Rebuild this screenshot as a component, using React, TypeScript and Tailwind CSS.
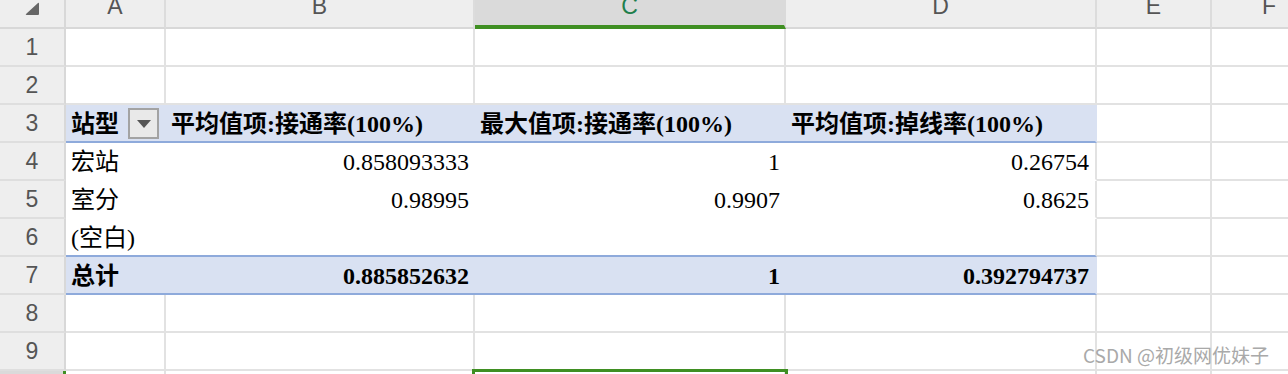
import React from "react";

// 列幅（行番号列の右側）
const COLS = [
  { key: "A", w: "w-[100px]" },
  { key: "B", w: "w-[309px]" },
  { key: "C", w: "w-[311px]" },
  { key: "D", w: "w-[311px]" },
  { key: "E", w: "w-[115px]" },
  { key: "F", w: "w-[116px]" },
];

const cellFont = "font-['Liberation_Serif','Noto_Sans_CJK_SC',serif] text-[24px] leading-none text-black";

type PivotRow = {
  n: number;
  cells: string[];
  kind: "head" | "body" | "total";
};

const pivot: PivotRow[] = [
  { n: 3, kind: "head", cells: ["站型", "平均值项:接通率(100%)", "最大值项:接通率(100%)", "平均值项:掉线率(100%)"] },
  { n: 4, kind: "body", cells: ["宏站", "0.858093333", "1", "0.26754"] },
  { n: 5, kind: "body", cells: ["室分", "0.98995", "0.9907", "0.8625"] },
  { n: 6, kind: "body", cells: ["(空白)", "", "", ""] },
  { n: 7, kind: "total", cells: ["总计", "0.885852632", "1", "0.392794737"] },
];

function RowHeader({ n }: { n: number }) {
  return (
    <div className="w-[66px] h-[38px] shrink-0 bg-[#eeeeee] border-r-2 border-b-2 border-r-[#d8d8d8] border-b-[#dedede] flex items-center justify-center font-['Liberation_Sans',sans-serif] text-[23px] text-[#555555]">
      {n}
    </div>
  );
}

function EmptyCell({ w }: { w: string }) {
  return <div className={`${w} h-[38px] shrink-0 border-r-2 border-b-2 border-[#e2e2e2] bg-white`} />;
}

function DropButton() {
  return (
    <span className="ml-[9px] mb-[-3px] w-[31px] h-[31px] shrink-0 inline-flex items-center justify-center border-2 border-[#a3a3a3] bg-[#e9e9e9]">
      <svg width="14" height="8" viewBox="0 0 14 8">
        <polygon points="0,0 14,0 7,8" fill="#555555" />
      </svg>
    </span>
  );
}

function PivotLine({ row }: { row: PivotRow }) {
  const blue = row.kind !== "body";
  const bg = blue ? "bg-[#d9e1f2]" : "bg-white";
  // 6行目の下線＝総計行の上線
  const bottom =
    row.kind === "head" || row.kind === "total" || row.n === 6
      ? "border-b-2 border-b-[#8eaadb]"
      : "border-b-2 border-b-white";
  const weight = row.kind === "body" ? "font-normal" : "font-bold";
  return (
    <div className="flex">
      <RowHeader n={row.n} />
      {row.cells.map((t, i) => {
        const numeric = row.kind !== "head" && i > 0;
        const last = i === 3;
        const right = last
          ? blue
            ? "border-r-2 border-r-[#d9e1f2]"
            : "border-r-2 border-r-[#e2e2e2]"
          : "";
        return (
          <div
            key={i}
            className={`${COLS[i].w} h-[38px] shrink-0 ${bg} ${bottom} ${right} ${cellFont} ${weight} flex items-end pb-[5px] ${
              numeric ? "justify-end pr-[6px]" : "justify-start pl-[5px]"
            } whitespace-nowrap`}
          >
            {t}
            {row.kind === "head" && i === 0 && <DropButton />}
          </div>
        );
      })}
      <EmptyCell w={COLS[4].w} />
      <EmptyCell w={COLS[5].w} />
    </div>
  );
}

function PlainLine({ n }: { n: number }) {
  return (
    <div className="flex">
      <RowHeader n={n} />
      {COLS.map((c) => (
        <EmptyCell key={c.key} w={c.w} />
      ))}
    </div>
  );
}

export default function App() {
  return (
    <div className="relative w-[1288px] h-[374px] overflow-hidden bg-white">
      {/* 列ヘッダー */}
      <div className="flex h-[29px]">
        <div className="w-[66px] h-[29px] shrink-0 bg-[#eeeeee] border-r-2 border-b-2 border-[#d8d8d8] relative">
          <svg className="absolute left-[24px] top-[1px]" width="16" height="15" viewBox="0 0 16 15">
            <path d="M14 2 Q15 1 15 3 L15 13 Q15 14 14 14 L3 14 Q1 14 2 13 Z" fill="#666666" />
          </svg>
        </div>
        {COLS.map((c) => {
          const sel = c.key === "C";
          return (
            <div
              key={c.key}
              className={`${c.w} h-[29px] shrink-0 overflow-hidden flex justify-center border-r-2 ${
                sel
                  ? "bg-[#dadada] border-r-[#dadada] border-b-4 border-b-[#3f8f22] text-[#1f7f4c]"
                  : "bg-[#eeeeee] border-r-[#dcdcdc] border-b-2 border-b-[#d8d8d8] text-[#555555]"
              } font-['Liberation_Sans',sans-serif] text-[23px]`}
            >
              <span className="leading-[21px] -mt-[4px]">{c.key}</span>
            </div>
          );
        })}
      </div>

      <PlainLine n={1} />
      <PlainLine n={2} />
      {pivot.map((r) => (
        <PivotLine key={r.n} row={r} />
      ))}
      <PlainLine n={8} />
      <PlainLine n={9} />

      {/* 10行目（一部のみ表示） */}
      <div className="flex">
        <div className="w-[66px] h-[38px] shrink-0 bg-[#dadada] border-r-[3px] border-r-[#3f8f22]" />
        {COLS.map((c) => (
          <EmptyCell key={c.key} w={c.w} />
        ))}
      </div>

      {/* 選択セル C10 */}
      <div className="absolute left-[472px] top-[369px] w-[316px] h-[30px] border-[3px] border-[#3f8f22]" />

      {/* 透かし */}
      <div className="absolute left-[1083px] top-[343px] font-['Noto_Sans_CJK_SC',sans-serif] text-[19px] leading-[24px] text-[#a9a9a9] whitespace-nowrap">
        CSDN @初级网优妹子
      </div>
    </div>
  );
}
